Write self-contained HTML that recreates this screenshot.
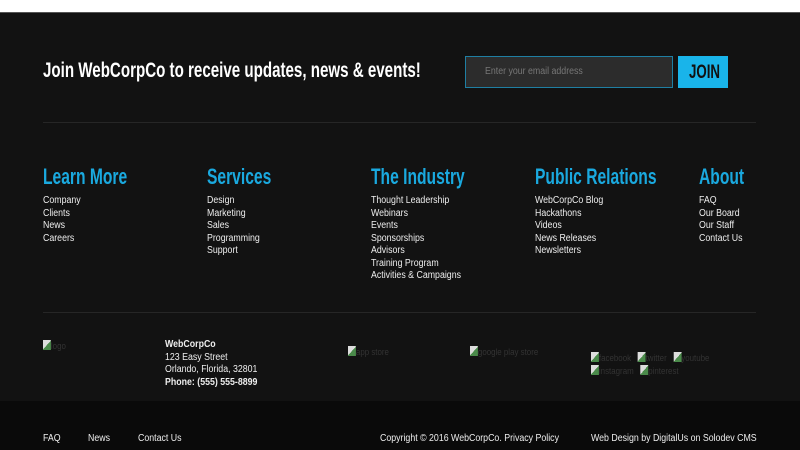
<!DOCTYPE html>
<html><head><style>
*{margin:0;padding:0;box-sizing:border-box}
body{width:800px;height:450px;overflow:hidden;background:#fff;font-family:"Liberation Sans",sans-serif;position:relative}
.main{position:absolute;top:12px;left:0;width:800px;height:389px;background:#121212;border-top:1px solid #555}
.bot{position:absolute;top:401px;left:0;width:800px;height:49px;background:#0a0a0a}
.a{position:absolute;white-space:nowrap}
.n{transform:scaleX(0.88);transform-origin:0 0}
.cond{font-weight:bold;transform-origin:0 0}
h2{position:absolute;top:164px;font-weight:bold;font-size:22px;color:#1aa9df;white-space:nowrap;transform:scaleX(0.71);transform-origin:0 0}
ul{position:absolute;top:195px;list-style:none;font-size:10px;line-height:12.5px;color:#eee;transform:scaleX(0.88);transform-origin:0 0}
.hr{position:absolute;left:43px;width:713px;height:1px;background:#262626}
.s{font-size:10px;color:#eee}
.alt{font-size:9px;color:#333}
.ic{display:inline-block;width:9px;height:10px;background:linear-gradient(135deg,#ddd 50%,#4a8a4a 50%);vertical-align:-1px}
</style></head><body>
<div class="main"></div>
<div class="bot"></div>
<div class="a cond" style="left:43px;top:59px;font-size:21px;color:#fff;transform:scaleX(0.72)">Join WebCorpCo to receive updates, news &amp; events!</div>
<div class="a" style="left:465px;top:56px;width:208px;height:32px;background:#2c2c2c;border:1px solid #1f7fa3"><span class="a n" style="left:19px;top:9px;font-size:10px;color:#777">Enter your email address</span></div>
<div class="a" style="left:678px;top:56px;width:50px;height:32px;background:#19b4ea"><span class="a cond" style="left:11px;top:6px;font-size:19px;color:#111;transform:scaleX(0.7)">JOIN</span></div>
<div class="hr" style="top:122px"></div>
<h2 style="left:43px">Learn More</h2>
<h2 style="left:207px">Services</h2>
<h2 style="left:371px">The Industry</h2>
<h2 style="left:535px">Public Relations</h2>
<h2 style="left:699px">About</h2>
<ul style="left:43px"><li>Company</li><li>Clients</li><li>News</li><li>Careers</li></ul>
<ul style="left:207px"><li>Design</li><li>Marketing</li><li>Sales</li><li>Programming</li><li>Support</li></ul>
<ul style="left:371px"><li>Thought Leadership</li><li>Webinars</li><li>Events</li><li>Sponsorships</li><li>Advisors</li><li>Training Program</li><li>Activities &amp; Campaigns</li></ul>
<ul style="left:535px"><li>WebCorpCo Blog</li><li>Hackathons</li><li>Videos</li><li>News Releases</li><li>Newsletters</li></ul>
<ul style="left:699px"><li>FAQ</li><li>Our Board</li><li>Our Staff</li><li>Contact Us</li></ul>
<div class="hr" style="top:312px"></div>
<div class="a alt n" style="left:43px;top:340px"><span class="ic"></span>logo</div>
<div class="a s n" style="left:165px;top:339px;line-height:12.6px"><b>WebCorpCo</b><br>123 Easy Street<br>Orlando, Florida, 32801<br><b>Phone: (555) 555-8899</b></div>
<div class="a alt n" style="left:348px;top:346px"><span class="ic"></span>app store</div>
<div class="a alt n" style="left:470px;top:346px"><span class="ic"></span>google play store</div>
<div class="a alt n" style="left:591px;top:352px;line-height:13px"><span class="ic"></span>facebook &nbsp;&nbsp;<span class="ic"></span>twitter &nbsp;&nbsp;<span class="ic"></span>youtube<br><span class="ic"></span>instagram &nbsp;&nbsp;<span class="ic"></span>pinterest</div>
<div class="a s n" style="left:43px;top:433px">FAQ</div>
<div class="a s n" style="left:88px;top:433px">News</div>
<div class="a s n" style="left:138px;top:433px">Contact Us</div>
<div class="a s n" style="left:380px;top:433px">Copyright © 2016 WebCorpCo. Privacy Policy</div>
<div class="a s n" style="left:591px;top:433px">Web Design by DigitalUs on Solodev CMS</div>
</body></html>
